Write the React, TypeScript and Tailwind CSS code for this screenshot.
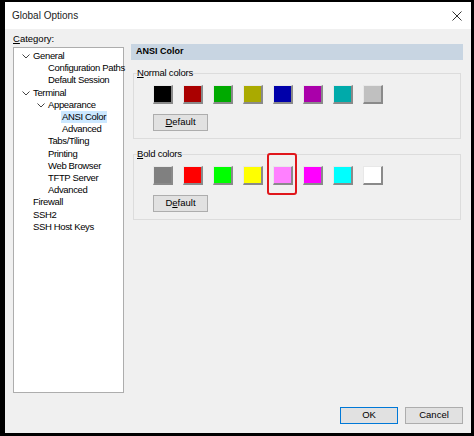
const normal = ["#000000", "#aa0000", "#00aa00", "#aaaa00", "#0000aa", "#aa00aa", "#00aaaa", "#c0c0c0"];
const bold = ["#808080", "#ff0000", "#00ff00", "#ffff00", "#ff80ff", "#ff00ff", "#00ffff", "#ffffff"];

type Node = { label: string; indent: number; open?: boolean; selected?: boolean };

const tree: Node[] = [
  { label: "General", indent: 0, open: true },
  { label: "Configuration Paths", indent: 1 },
  { label: "Default Session", indent: 1 },
  { label: "Terminal", indent: 0, open: true },
  { label: "Appearance", indent: 1, open: true },
  { label: "ANSI Color", indent: 2, selected: true },
  { label: "Advanced", indent: 2 },
  { label: "Tabs/Tiling", indent: 1 },
  { label: "Printing", indent: 1 },
  { label: "Web Browser", indent: 1 },
  { label: "TFTP Server", indent: 1 },
  { label: "Advanced", indent: 1 },
  { label: "Firewall", indent: 0 },
  { label: "SSH2", indent: 0 },
  { label: "SSH Host Keys", indent: 0 },
];

function Chevron() {
  return (
    <svg width="8" height="5" viewBox="0 0 8 5" className="shrink-0">
      <path d="M0.5 0.5 L4 4 L7.5 0.5" fill="none" stroke="#444" strokeWidth="1" />
    </svg>
  );
}

function TreeRow({ node }: { node: Node }) {
  // first level text at 33px, each level +15px
  const pad = ["pl-[18px]", "pl-[33px]", "pl-[47px]"][node.indent];
  return (
    <div className={`flex items-center h-[12.2px] ${pad} relative whitespace-nowrap`}>
      {node.open && (
        <span className="absolute top-[4px]" style={{ left: 8 + node.indent * 15 }}>
          <Chevron />
        </span>
      )}
      <span className={`px-[1px] leading-[12px] tracking-[-0.35px] ${node.selected ? "bg-[#cce8ff]" : ""}`}>
        {node.label}
      </span>
    </div>
  );
}

function Swatch({ color }: { color: string }) {
  return (
    <div
      className="w-[20px] h-[19px] border-r-2 border-b-2 border-[#8a8a8a] border-t border-l border-t-[#e8e8e8] border-l-[#e8e8e8]"
      style={{ backgroundColor: color }}
    />
  );
}

function Button({ children, primary }: { children: React.ReactNode; primary?: boolean }) {
  return (
    <button
      className={`w-[58px] h-[17px] flex items-center justify-center bg-[#e1e1e1] border ${
        primary ? "border-[#0078d7]" : "border-[#adadad]"
      } text-[9.5px] text-black`}
    >
      {children}
    </button>
  );
}

function ColorGroup({
  title,
  colors,
  mark,
  defaultLabel,
}: {
  title: React.ReactNode;
  colors: string[];
  mark?: number;
  defaultLabel: React.ReactNode;
}) {
  return (
    <fieldset className="border border-[#dcdcdc] mx-[2px] px-[19px] pb-[7px] pt-0">
      <legend className="px-0 -ml-[16px] text-[9.5px] leading-[12px] tracking-[-0.2px]">{title}</legend>
      <div className="flex gap-[10px] mt-[6px]">
        {colors.map((c, i) => (
          <div key={i} className="relative">
            <Swatch color={c} />
            {mark === i && (
              <div className="absolute -left-[6px] -top-[13px] w-[30px] h-[42px] border-2 border-[#e0161b] rounded-[3px]" />
            )}
          </div>
        ))}
      </div>
      <div className="mt-[10px]">
        <button className="w-[55px] h-[17px] flex items-center justify-center bg-[#e1e1e1] border border-[#adadad] text-[9.5px]">
          {defaultLabel}
        </button>
      </div>
    </fieldset>
  );
}

export default function App() {
  return (
    <div
      className="w-[474px] h-[436px] bg-black pl-[5px] pr-[3px] pt-[2px] pb-[3px] text-black"
      style={{ fontFamily: '"Liberation Sans", Arial, sans-serif' }}
    >
      <div className="h-full flex flex-col bg-[#f0f0f0]">
        <div className="h-[27px] bg-white flex items-center justify-between pl-[7px] pr-[9px] shrink-0">
          <span className="text-[10px] text-[#222]">Global Options</span>
          <svg width="10" height="10" viewBox="0 0 10 10">
            <path d="M0.5 0.5 L9.5 9.5 M9.5 0.5 L0.5 9.5" stroke="#333" strokeWidth="1" />
          </svg>
        </div>
        <div className="flex-1 flex flex-col px-[8px] text-[9.5px]">
          <div className="flex gap-[7px]">
            <div className="w-[111px] flex flex-col">
              <div className="h-[18px] pt-[4px] leading-[12px]">
                <span className="underline">C</span>ategory:
              </div>
              <div className="h-[346px] bg-white border border-[#adadad] pt-[2px]">
                {tree.map((n, i) => (
                  <TreeRow key={i} node={n} />
                ))}
              </div>
            </div>
            <div className="flex-1 flex flex-col pt-[15px]">
              <div className="h-[16px] bg-[#c8d5e2] flex items-center pl-[5px] font-bold text-[9px]">ANSI Color</div>
              <div className="mt-[7px]">
                <ColorGroup
                  title={
                    <>
                      <span className="underline">N</span>ormal colors
                    </>
                  }
                  colors={normal}
                  defaultLabel={
                    <>
                      <span className="underline">D</span>efault
                    </>
                  }
                />
              </div>
              <div className="mt-[9px]">
                <ColorGroup
                  title={
                    <>
                      <span className="underline">B</span>old colors
                    </>
                  }
                  colors={bold}
                  mark={4}
                  defaultLabel={
                    <>
                      D<span className="underline">e</span>fault
                    </>
                  }
                />
              </div>
            </div>
          </div>
          <div className="flex justify-end gap-[7px] mt-[14px]">
            <Button primary>OK</Button>
            <Button>Cancel</Button>
          </div>
        </div>
      </div>
    </div>
  );
}
